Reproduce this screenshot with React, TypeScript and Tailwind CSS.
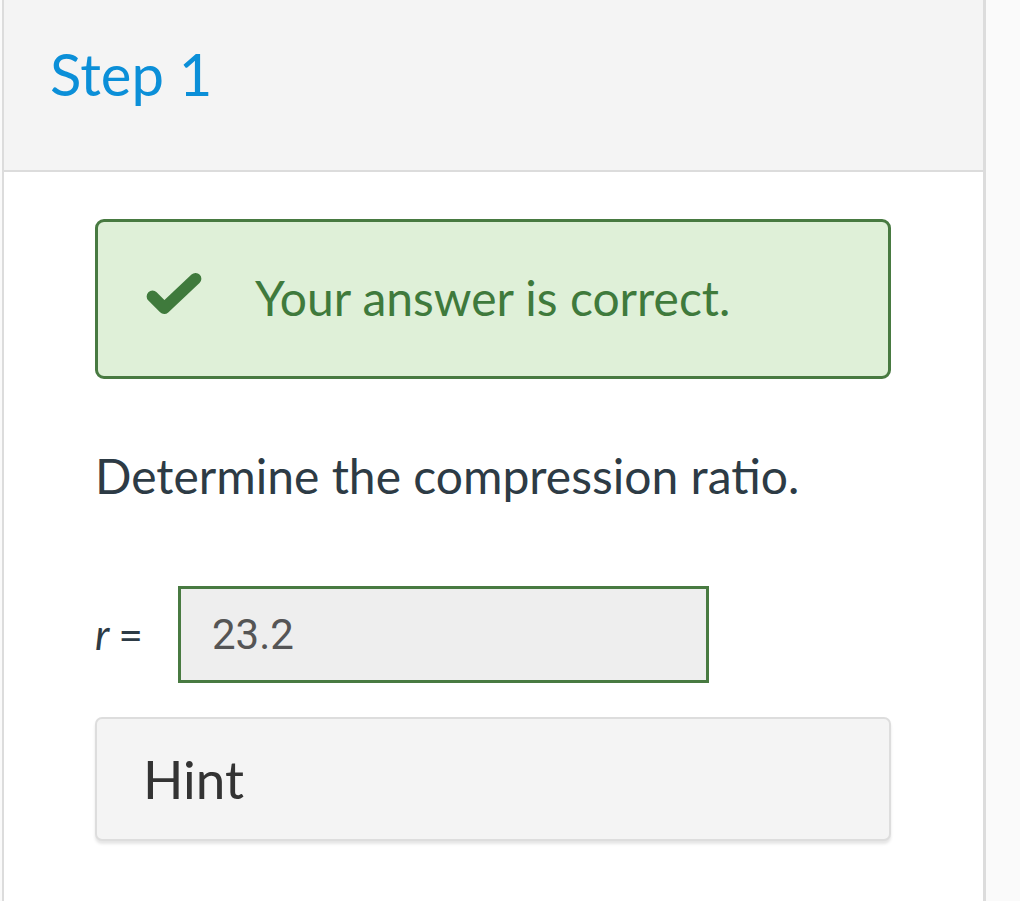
export default function App() {
  return (
    <div className="flex h-[901px] w-[1020px] overflow-hidden bg-[#fafafa] font-['Lato',sans-serif]">
      <div className="ml-[2px] h-full w-[984px] border-l-2 border-r-[3px] border-[#dcdcdc] bg-white">
        <header className="flex h-[172px] items-center border-b-2 border-[#dcdcdc] bg-[#f4f4f4] pb-[22px] pl-[46px]">
          <h1 className="text-[58px] leading-none text-[#0b8fd8]">Step 1</h1>
        </header>
        <main className="pl-[91px]">
          <div className="mt-[47px] flex h-[160px] w-[796px] items-center rounded-[9px] border-[3px] border-[#487a41] bg-[#dff0d8] pb-[2px]">
            <svg viewBox="0 0 56 44" className="mb-[10px] ml-[48px] h-[43px] w-[56px]">
              <path
                d="M6 25 L18 37 L50 7"
                fill="none"
                stroke="#3f7a3c"
                strokeWidth="12"
                strokeLinecap="round"
                strokeLinejoin="round"
              />
            </svg>
            <p className="ml-[53px] text-[48px] leading-none text-[#3f7a3c]">Your answer is correct.</p>
          </div>
          <p className="mt-[73px] text-[48px] leading-none text-[#2d3b45]">Determine the compression ratio.</p>
          <div className="mt-[86px] flex items-center">
            <span className="w-[83px] text-[42px] italic text-[#2d3b45]">
              r <span className="not-italic">=</span>
            </span>
            <div className="flex h-[97px] w-[531px] items-center border-[3px] border-[#487a41] bg-[#eeeeee] pl-[31px]">
              <span className="font-['Roboto',sans-serif] text-[42px] text-[#555555]">23.2</span>
            </div>
          </div>
          <div className="mt-[34px] flex h-[124px] w-[796px] items-center rounded-[7px] border-2 border-[#dddddd] bg-[#f4f4f4] pl-[46px] shadow-[0_3px_3px_rgba(0,0,0,0.1)]">
            <span className="text-[53px] text-[#333333]">Hint</span>
          </div>
        </main>
      </div>
    </div>
  );
}
